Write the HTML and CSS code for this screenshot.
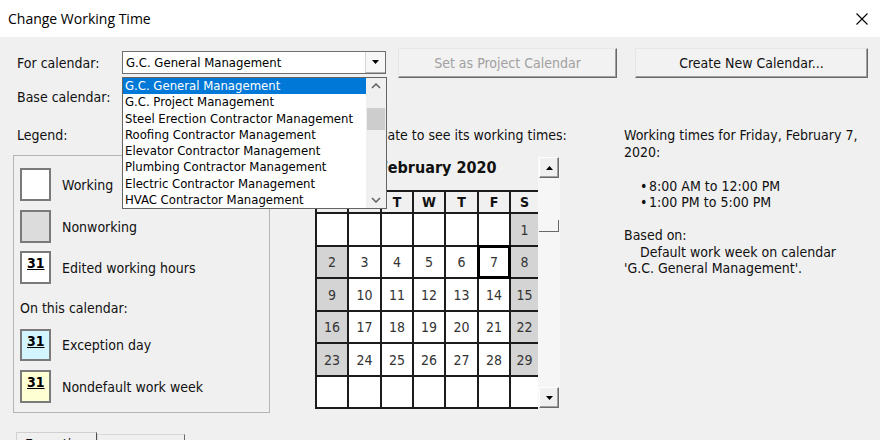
FILE: index.html
```html
<!DOCTYPE html>
<html>
<head>
<meta charset="utf-8">
<link rel="stylesheet" href="styles.css">
</head>
<body>
<div class="titlebar">
  <span class="title">Change Working Time</span>
  <svg class="close" width="12" height="12" viewBox="0 0 12 12"><path d="M0.5 0.5 L11.5 11.5 M11.5 0.5 L0.5 11.5" stroke="#000" stroke-width="1.1" fill="none"/></svg>
</div>
<div class="content">
  <div class="row-top">
    <span class="lbl-for">For calendar:</span>
    <div class="combo">
      <span class="combo-val">G.C. General Management</span>
      <span class="combo-btn"><svg width="7" height="4" viewBox="0 0 7 4"><polygon points="0,0 7,0 3.5,4" fill="#000"/></svg></span>
      <div class="droplist">
        <ul class="items">
          <li class="sel">G.C. General Management</li>
          <li>G.C. Project Management</li>
          <li>Steel Erection Contractor Management</li>
          <li>Roofing Contractor Management</li>
          <li>Elevator Contractor Management</li>
          <li>Plumbing Contractor Management</li>
          <li>Electric Contractor Management</li>
          <li>HVAC Contractor Management</li>
        </ul>
        <div class="lscroll">
          <svg class="chev" width="10" height="6" viewBox="0 0 10 6"><polyline points="1,5 5,1 9,5" fill="none" stroke="#606060" stroke-width="1.5"/></svg>
          <div class="lthumb"></div>
          <div class="lspacer"></div>
          <svg class="chev" width="10" height="6" viewBox="0 0 10 6"><polyline points="1,1 5,5 9,1" fill="none" stroke="#606060" stroke-width="1.5"/></svg>
        </div>
      </div>
    </div>
    <button class="btn btn-set">Set as Project Calendar</button>
    <button class="btn btn-create">Create New Calendar...</button>
  </div>
  <div class="row-base">Base calendar:</div>
  <div class="main">
    <div class="col-legend">
      <div class="col-head">Legend:</div>
      <div class="group">
        <div class="leg-item"><span class="sw sw-work"></span><span class="leg-lbl">Working</span></div>
        <div class="leg-item gap9"><span class="sw sw-non"></span><span class="leg-lbl">Nonworking</span></div>
        <div class="leg-item gap8"><span class="sw sw-edit"><u>31</u></span><span class="leg-lbl">Edited working hours</span></div>
        <div class="on-cal">On this calendar:</div>
        <div class="leg-item gap13"><span class="sw sw-exc"><u>31</u></span><span class="leg-lbl">Exception day</span></div>
        <div class="leg-item gap9"><span class="sw sw-nd"><u>31</u></span><span class="leg-lbl">Nondefault work week</span></div>
      </div>
    </div>
    <div class="col-cal">
      <div class="col-head cal-head">Click on a date to see its working times:</div>
      <div class="calendar">
        <div class="cal-main">
          <div class="month">February 2020</div>
          <div class="grid">
            <div class="hd">S</div><div class="hd">M</div><div class="hd">T</div><div class="hd">W</div><div class="hd">T</div><div class="hd">F</div><div class="hd">S</div>
            <div class="d"></div><div class="d"></div><div class="d"></div><div class="d"></div><div class="d"></div><div class="d"></div><div class="d we">1</div>
            <div class="d we">2</div><div class="d">3</div><div class="d">4</div><div class="d">5</div><div class="d">6</div><div class="d today">7</div><div class="d we">8</div>
            <div class="d we">9</div><div class="d">10</div><div class="d">11</div><div class="d">12</div><div class="d">13</div><div class="d">14</div><div class="d we">15</div>
            <div class="d we">16</div><div class="d">17</div><div class="d">18</div><div class="d">19</div><div class="d">20</div><div class="d">21</div><div class="d we">22</div>
            <div class="d we">23</div><div class="d">24</div><div class="d">25</div><div class="d">26</div><div class="d">27</div><div class="d">28</div><div class="d we">29</div>
            <div class="d"></div><div class="d"></div><div class="d"></div><div class="d"></div><div class="d"></div><div class="d"></div><div class="d"></div>
          </div>
        </div>
        <div class="cal-scroll">
          <div class="sbtn"><svg width="7" height="4" viewBox="0 0 7 4"><polygon points="0,4 7,4 3.5,0" fill="#000"/></svg></div>
          <div class="track"><div class="thumb"></div></div>
          <div class="sbtn"><svg width="7" height="4" viewBox="0 0 7 4"><polygon points="0,0 7,0 3.5,4" fill="#000"/></svg></div>
        </div>
      </div>
    </div>
    <div class="col-info">
      <p class="info-head">Working times for Friday, February 7,<br>2020:</p>
      <ul class="times">
        <li>8:00 AM to 12:00 PM</li>
        <li>1:00 PM to 5:00 PM</li>
      </ul>
      <p class="based">Based on:<br><span class="indent">Default work week on calendar</span><br>'G.C. General Management'.</p>
    </div>
  </div>
  <div class="tabs">
    <div class="tab tab-on">Exceptions</div>
    <div class="tab">Work Weeks</div>
  </div>
</div>
</body>
</html>
```

FILE: styles.css
```css
html, body {
  margin: 0;
  padding: 0;
  width: 880px;
  height: 440px;
  overflow: hidden;
}
body {
  background: #f0f0f0;
  font-family: "DejaVu Sans Condensed", "DejaVu Sans", sans-serif;
  font-stretch: condensed;
  font-size: 14px;
  color: #111;
}
.titlebar {
  height: 37px;
  background: #fff;
  display: flex;
  align-items: center;
  justify-content: space-between;
  padding: 0 12px 0 8px;
}
.title {
  font-family: "Open Sans", "Noto Sans", sans-serif;
  font-stretch: normal;
  font-size: 14px;
  color: #000;
}
.close { display: block; }
.content {
  padding: 11px 0 0 13px;
}
.row-top {
  display: flex;
  align-items: center;
  height: 30px;
}
.row-top > * { flex-shrink: 0; }
.lbl-for {
  width: 105px;
  padding-left: 4px;
}
.combo {
  position: relative;
  z-index: 10;
  width: 264px;
  height: 23px;
  box-sizing: border-box;
  border: 1px solid #6e6e6e;
  background: #fff;
  display: flex;
  align-items: center;
  margin-top: -1px;
  font-size: 13px;
}
.combo-val {
  flex: 1;
  padding-left: 3px;
  color: #000;
}
.combo-btn {
  width: 20px;
  height: 21px;
  box-sizing: border-box;
  background: #f7f7f7;
  border-left: 1px solid #d6d6d6;
  border-bottom: 1px solid #b0b0b0;
  display: flex;
  align-items: center;
  justify-content: center;
}
.combo-btn svg { display: block; }
.droplist {
  position: absolute;
  top: 25px;
  left: -1px;
  width: 265px;
  height: 132px;
  box-sizing: border-box;
  border: 1px solid #646464;
  background: #fff;
  display: flex;
}
.items {
  list-style: none;
  margin: 0;
  padding: 0;
  width: 243px;
}
.items li {
  height: 16.25px;
  line-height: 16px;
  padding-left: 2px;
  white-space: nowrap;
  color: #000;
}
.items li.sel {
  background: #0078d7;
  color: #fff;
}
.lscroll {
  width: 20px;
  background: #f0f0f0;
  display: flex;
  flex-direction: column;
  align-items: center;
}
.chev { display: block; margin: 5px 0; }
.lthumb {
  margin-top: 14px;
  width: 18px;
  height: 22px;
  background: #cdcdcd;
}
.lspacer { flex: 1; }
.btn {
  height: 30px;
  box-sizing: border-box;
  background: #f2f2f2;
  border: 1px solid;
  border-color: #e6e6e6 #696969 #696969 #e6e6e6;
  box-shadow: inset -1px -1px 0 #a0a0a0;
  font-family: inherit;
  font-stretch: condensed;
  font-size: 14px;
  padding: 0;
}
.btn-set {
  margin-left: 12px;
  width: 219px;
  color: #a0a0a0;
}
.btn-create {
  margin-left: 18px;
  width: 233px;
  color: #111;
}
.row-base {
  margin-top: 11px;
  height: 16px;
  line-height: 16px;
  padding-left: 4px;
}
.main {
  margin-top: 22px;
  display: flex;
  align-items: flex-start;
}
.main > * { flex-shrink: 0; }
.col-head {
  height: 16px;
  line-height: 16px;
  white-space: nowrap;
}
.col-legend {
  width: 257px;
}
.col-legend .col-head { padding-left: 4px; }
.group {
  margin-top: 12px;
  height: 258px;
  box-sizing: border-box;
  border: 1px solid #b4b4b4;
  padding: 12px 6px 0 6px;
}
.leg-item {
  display: flex;
  align-items: center;
}
.gap8 { margin-top: 8px; }
.gap9 { margin-top: 9px; }
.gap13 { margin-top: 13px; }
.sw {
  width: 31px;
  height: 33px;
  box-sizing: border-box;
  border: 2px solid #7a7a7a;
  margin-right: 11px;
  padding: 3px 0 0 5px;
  font-weight: bold;
  font-size: 14px;
  line-height: 15px;
  color: #000;
}
.sw-work { background: #fff; }
.sw-non { background: #dcdcdc; }
.sw-edit { background: #fff; }
.sw-exc { background: #d2f5ff; height: 32px; }
.sw-nd { background: #ffffd4; }
.on-cal {
  margin-top: 16px;
  height: 16px;
  line-height: 16px;
}
.col-cal {
  margin-left: 44px;
  width: 246px;
}
.calendar {
  margin-top: 14px;
  display: flex;
  height: 251px;
}
.cal-main {
  margin-left: 1px;
  width: 223px;
}
.month {
  height: 33px;
  line-height: 22px;
  padding-left: 22px;
  text-align: center;
  font-weight: bold;
  font-size: 16px;
  color: #111;
}
.grid {
  display: grid;
  grid-template-columns: 30px 31px 30px 30px 31px 30px 27px;
  grid-template-rows: 20px 31px 30px 31px 30px 31px 30px;
  gap: 2px;
  padding: 2px 0 2px 2px;
  background: #1c1c1c;
}
.hd {
  background: #f0f0f0;
  font-weight: bold;
  text-align: center;
  line-height: 20px;
  font-size: 14px;
  color: #111;
}
.d {
  background: #fff;
  display: flex;
  align-items: center;
  justify-content: center;
  color: #333;
}
.d.we { background: #d4d4d4; }
.d.today {
  position: relative;
  box-shadow: 0 0 0 2px #000, inset 0 0 0 1px #000;
}
.cal-scroll {
  width: 22px;
  display: flex;
  flex-direction: column;
  background: #f6f6f6;
}
.sbtn {
  margin-left: 1px;
  width: 20px;
  height: 21px;
  box-sizing: border-box;
  background: #f0f0f0;
  border: 1px solid;
  border-color: #fff #696969 #696969 #fff;
  box-shadow: inset -1px -1px 0 #a0a0a0;
  display: flex;
  align-items: center;
  justify-content: center;
}
.sbtn svg { display: block; }
.track {
  flex: 1;
}
.thumb {
  margin: 42px 0 0 1px;
  width: 20px;
  height: 12px;
  box-sizing: border-box;
  border-right: 1px solid #696969;
  border-bottom: 1px solid #696969;
}
.col-info {
  margin-left: 64px;
  width: 256px;
  white-space: nowrap;
}
.info-head {
  margin: 0;
  line-height: 17px;
}
.times {
  margin: 17px 0 0 0;
  padding-left: 16px;
  list-style: none;
}
.times li {
  line-height: 16px;
}
.times li::before {
  content: "\2022";
  display: inline-block;
  width: 9px;
}
.based {
  margin: 17px 0 0 0;
  line-height: 16.5px;
}
.indent { padding-left: 16px; }
.tabs {
  margin-top: 19px;
  display: flex;
  align-items: flex-start;
}
.tab {
  height: 20px;
  box-sizing: border-box;
  padding: 3px 0 0 8px;
  background: #f0f0f0;
  border: 1px solid;
  border-color: #d8d8d8 #696969 transparent #d8d8d8;
  margin-top: 2px;
  width: 88px;
  white-space: nowrap;
  overflow: hidden;
}
.tab-on {
  margin-left: 3px;
  margin-top: 0;
  width: 81px;
  border-color: #d0d0d0 #505050 transparent #d0d0d0;
}
```
